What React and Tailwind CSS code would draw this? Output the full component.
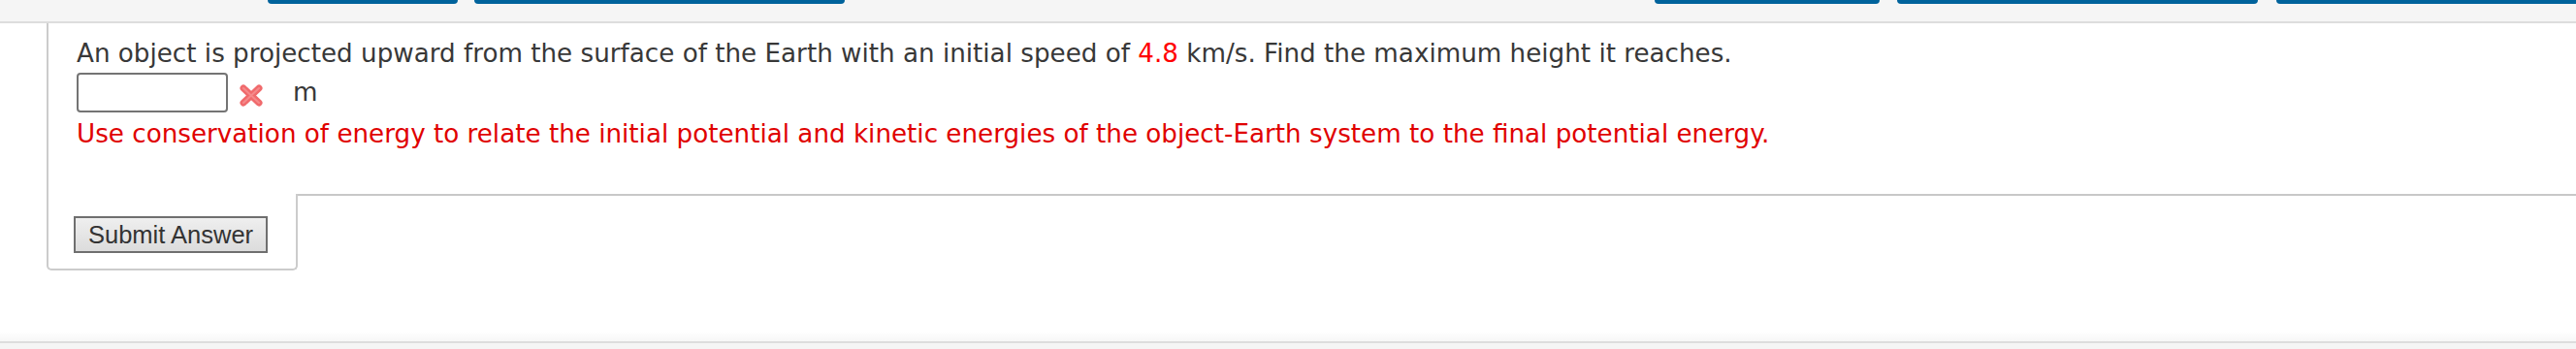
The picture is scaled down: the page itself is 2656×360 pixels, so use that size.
import React from 'react';

const tabs = [
  { left: 276, width: 196 },
  { left: 17, width: 382 },
  { left: 835, width: 232 },
  { left: 18, width: 372 },
  { left: 19, width: 320 },
];

function WrongMark() {
  return (
    <svg width="26" height="25" viewBox="0 0 26 25" className="shrink-0">
      <path d="M5 5 L21 20 M21 5 L5 20" stroke="#f06a6c" strokeWidth="7" strokeLinecap="round" fill="none" />
      <path d="M5 5 L21 20 M21 5 L5 20" stroke="#f58a8b" strokeWidth="2" strokeLinecap="round" fill="none" />
    </svg>
  );
}

export default function App() {
  return (
    <div className="w-[2656px] h-[360px] overflow-hidden flex flex-col bg-white" style={{ fontFamily: '"DejaVu Sans", Verdana, sans-serif' }}>

      {/* top strip with tabs */}
      <div className="h-[24px] shrink-0 bg-[#f5f5f5] border-b-2 border-[#dddddd] flex items-start">
        {tabs.map((t, i) => (
          <div
            key={i}
            className="h-[4px] shrink-0 bg-[#00639c] rounded-b-[4px]"
            style={{ marginLeft: t.left, width: t.width }}
          />
        ))}
      </div>

      {/* question area */}
      <div className="flex-1 flex flex-col">
        <div className="ml-[48px] flex flex-col">
          <div className="border-l-2 border-[#cccccc] h-[176px] pl-[29px] pt-[15px] text-[26.2px] leading-[32px] text-[#383838]">
            <div className="whitespace-nowrap">
              An object is projected upward from the surface of the Earth with an initial speed of <span className="text-[#ff0000]">4.8</span> km/s. Find the maximum height it reaches.
            </div>
            <div className="flex items-start mt-[4px]">
              <div className="w-[156px] h-[41px] border-2 border-[#747474] rounded-[4px] bg-white" />
              <div className="ml-[11px] mt-[11px]">
                <WrongMark />
              </div>
              <div className="ml-[30px] mt-[4px]">m</div>
            </div>
            <div className="mt-[6px] text-[#e00000] whitespace-nowrap">
              Use conservation of energy to relate the initial potential and kinetic energies of the object-Earth system to the final potential energy.
            </div>
          </div>

          <div className="flex">
            <div className="w-[259px] h-[79px] shrink-0 border-l-2 border-r-2 border-b-2 border-[#cccccc] rounded-b-[5px] pl-[26px] pt-[23px]">
              <button
                className="h-[38px] px-[13px] border-2 border-[#6f6f6f] bg-gradient-to-b from-[#efefef] to-[#dcdcdc] text-[25.5px] leading-[30px] text-[#333333] whitespace-nowrap"
                style={{ fontFamily: '"Liberation Sans", Arial, sans-serif' }}
              >
                Submit Answer
              </button>
            </div>
            <div className="flex-1 border-t-2 border-[#c8c8c8]" />
          </div>
        </div>
        <div className="flex-1" />
        <div className="h-[10px] bg-gradient-to-b from-white to-[#f7f7f7]" />
      </div>

      {/* bottom strip */}
      <div className="h-[8px] shrink-0 bg-[#f5f5f5] border-t-2 border-[#dddddd]" />
    </div>
  );
}
